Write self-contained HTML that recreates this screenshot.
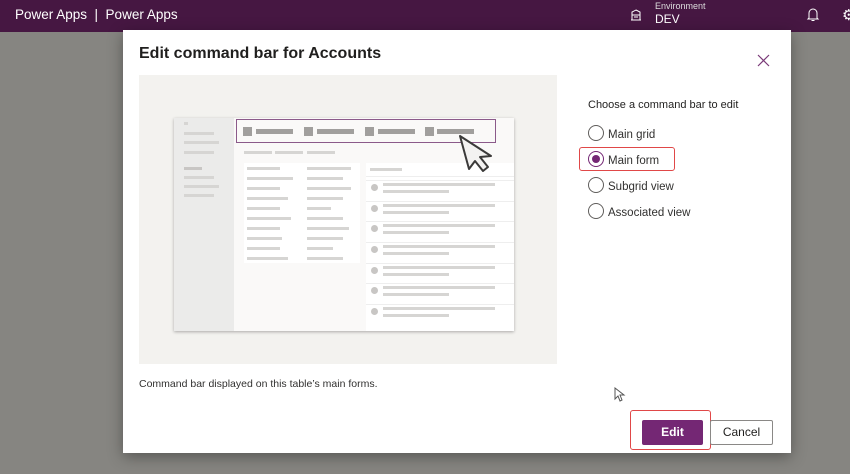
<!DOCTYPE html>
<html><head><meta charset="utf-8"><style>
*{margin:0;padding:0;box-sizing:border-box}
body{width:850px;height:474px;overflow:hidden;background:#868581;font-family:"Segoe UI","Liberation Sans",sans-serif;position:relative}
.a{position:absolute}
.top{left:0;top:0;width:850px;height:32px;background:#461742;color:#fff}
.dlg{left:123px;top:30px;width:668px;height:423px;background:#fff;box-shadow:0 4px 14px rgba(0,0,0,.35)}
.g{position:absolute;background:#d6d5d3;height:3px}
.d{position:absolute;background:#a19f9d}
.rad{position:absolute;width:16px;height:16px;border:1px solid #605e5c;border-radius:50%}
.lbl{position:absolute;font-size:11.5px;line-height:16px;color:#323130}
</style></head><body>
<div class="a top">
 <div class="a" style="left:15px;top:7px;font-size:13.5px">Power Apps&nbsp; | &nbsp;Power Apps</div>
 <svg class="a" style="left:630px;top:9px" width="12" height="13" viewBox="0 0 12 13"><path d="M6 1 L10 3 V6 H2 V3 Z M2 6 V11 H10 V6 M1 11 H11 M4 8 H8" stroke="#fff" fill="none" stroke-width="1"/></svg>
 <div class="a" style="left:655px;top:1px;font-size:9px;color:#ddd">Environment</div>
 <div class="a" style="left:655px;top:12px;font-size:12px">DEV</div>
 <svg class="a" style="left:806px;top:7px" width="14" height="16" viewBox="0 0 14 16"><path d="M3 11 V6 A4 4 0 0 1 11 6 V11 L12 12 H2 Z M5.5 13.5 H8.5" stroke="#fff" fill="none" stroke-width="1"/></svg>
 <div class="a" style="left:842px;top:6px;font-size:15px">⚙</div>
</div>
<div class="a dlg">
 <div class="a" style="left:16px;top:15px;font-size:16px;font-weight:bold;color:#201f1e">Edit command bar for Accounts</div>
 <svg class="a" style="left:634px;top:24px" width="13" height="13" viewBox="0 0 13 13"><path d="M1 1 L12 12 M12 1 L1 12" stroke="#7a3a78" stroke-width="1.2"/></svg>
 <div class="a" style="left:16px;top:45px;width:418px;height:289px;background:#f3f2ef">
  <div class="a" style="left:35px;top:43px;width:340px;height:213px;background:#faf9f8;box-shadow:0 1px 3px rgba(0,0,0,.3)">
   <div class="a" style="left:0;top:0;width:60px;height:213px;background:#ebebea">
    <div class="g" style="left:10px;top:4px;width:4px"></div>
    <div class="g" style="left:10px;top:14px;width:30px"></div><div class="g" style="left:10px;top:23px;width:35px"></div><div class="g" style="left:10px;top:33px;width:30px"></div>
    <div class="g" style="left:10px;top:49px;width:18px;background:#c8c6c4"></div>
    <div class="g" style="left:10px;top:58px;width:30px"></div><div class="g" style="left:10px;top:67px;width:35px"></div><div class="g" style="left:10px;top:76px;width:30px"></div>
   </div>
   <div class="a" style="left:62px;top:1px;width:260px;height:24px;border:1.5px solid #8b5a8a;background:#faf9f8">
    <div class="d" style="left:6px;top:7px;width:9px;height:9px"></div><div class="d" style="left:19px;top:9px;width:37px;height:5px"></div>
    <div class="d" style="left:67px;top:7px;width:9px;height:9px"></div><div class="d" style="left:80px;top:9px;width:37px;height:5px"></div>
    <div class="d" style="left:128px;top:7px;width:9px;height:9px"></div><div class="d" style="left:141px;top:9px;width:37px;height:5px"></div>
    <div class="d" style="left:188px;top:7px;width:9px;height:9px"></div><div class="d" style="left:200px;top:9px;width:37px;height:5px"></div>
   </div>
   <div class="g" style="left:70px;top:33px;width:28px"></div><div class="g" style="left:101px;top:33px;width:28px"></div><div class="g" style="left:133px;top:33px;width:28px"></div>
   <div class="a" style="left:70px;top:45px;width:116px;height:100px;background:#fff">
    <div class="g" style="left:3px;top:4px;width:33px"></div><div class="g" style="left:63px;top:4px;width:44px"></div>
    <div class="g" style="left:3px;top:14px;width:46px"></div><div class="g" style="left:63px;top:14px;width:36px"></div>
    <div class="g" style="left:3px;top:24px;width:33px"></div><div class="g" style="left:63px;top:24px;width:44px"></div>
    <div class="g" style="left:3px;top:34px;width:41px"></div><div class="g" style="left:63px;top:34px;width:36px"></div>
    <div class="g" style="left:3px;top:44px;width:33px"></div><div class="g" style="left:63px;top:44px;width:24px"></div>
    <div class="g" style="left:3px;top:54px;width:44px"></div><div class="g" style="left:63px;top:54px;width:36px"></div>
    <div class="g" style="left:3px;top:64px;width:33px"></div><div class="g" style="left:63px;top:64px;width:42px"></div>
    <div class="g" style="left:3px;top:74px;width:35px"></div><div class="g" style="left:63px;top:74px;width:36px"></div>
    <div class="g" style="left:3px;top:84px;width:33px"></div><div class="g" style="left:63px;top:84px;width:26px"></div>
    <div class="g" style="left:3px;top:94px;width:41px"></div><div class="g" style="left:63px;top:94px;width:36px"></div>
   </div>
   <div class="a" style="left:192px;top:45px;width:148px;height:168px;background:#fff">
    <div class="g" style="left:4px;top:5px;width:32px"></div>
    <div class="a" style="left:0;top:13px;width:148px;height:1px;background:#eee"></div>
   </div>
   <div id="cards"></div>
   <svg class="a" style="left:282px;top:16px" width="40" height="40" viewBox="0 0 40 40"><path d="M4 2 L35 22 L24 23 L32 33 L27 37 L19 27 L13 35 Z" fill="#f3f2f1" stroke="#3b3a39" stroke-width="2" stroke-linejoin="round"/></svg>
  </div>
 </div>
 <div class="a" style="left:16px;top:348px;font-size:10.5px;color:#323130">Command bar displayed on this table’s main forms.</div>
 <div class="a" style="left:465px;top:69px;font-size:11px;color:#201f1e">Choose a command bar to edit</div>
 <div class="a" style="left:456px;top:117px;width:96px;height:24px;border:1.5px solid #e04848;border-radius:3px"></div>
 <div class="rad" style="left:465px;top:95px"></div><div class="lbl" style="left:485px;top:97px">Main grid</div>
 <div class="rad" style="left:465px;top:121px;border-color:#742774"><div class="a" style="left:3px;top:3px;width:8px;height:8px;border-radius:50%;background:#742774"></div></div><div class="lbl" style="left:485px;top:123px">Main form</div>
 <div class="rad" style="left:465px;top:147px"></div><div class="lbl" style="left:485px;top:149px">Subgrid view</div>
 <div class="rad" style="left:465px;top:173px"></div><div class="lbl" style="left:485px;top:175px">Associated view</div>
 <svg class="a" style="left:491px;top:357px" width="12" height="16" viewBox="0 0 12 16"><path d="M1 1 V12 L4 9 L6 14 L8 13 L6 8 H10 Z" fill="#fff" stroke="#555" stroke-width="1"/></svg>
 <div class="a" style="left:507px;top:380px;width:81px;height:40px;border:1.5px solid #e04848;border-radius:3px"></div>
 <div class="a" style="left:519px;top:390px;width:61px;height:25px;background:#742774;border-radius:2px;color:#fff;font-size:12px;font-weight:bold;text-align:center;line-height:25px">Edit</div>
 <div class="a" style="left:587px;top:390px;width:63px;height:25px;border:1px solid #8a8886;border-radius:2px;color:#201f1e;font-size:12px;text-align:center;line-height:23px">Cancel</div>
</div>
<script>
var h='';var tops=[188,209,229,250,271,291,312];
for(var i=0;i<7;i++){var t=tops[i]-30-45-43;
h+='<div class="a" style="left:192px;top:'+(t-8)+'px;width:148px;height:1px;background:#eee"></div>';
h+='<div class="a" style="left:197px;top:'+(t-4)+'px;width:7px;height:7px;border-radius:50%;background:#c8c6c4"></div>';
h+='<div class="g" style="left:209px;top:'+(t-5)+'px;width:112px"></div><div class="g" style="left:209px;top:'+(t+2)+'px;width:66px"></div>';}
document.getElementById('cards').outerHTML=h;
</script>
</body></html>
